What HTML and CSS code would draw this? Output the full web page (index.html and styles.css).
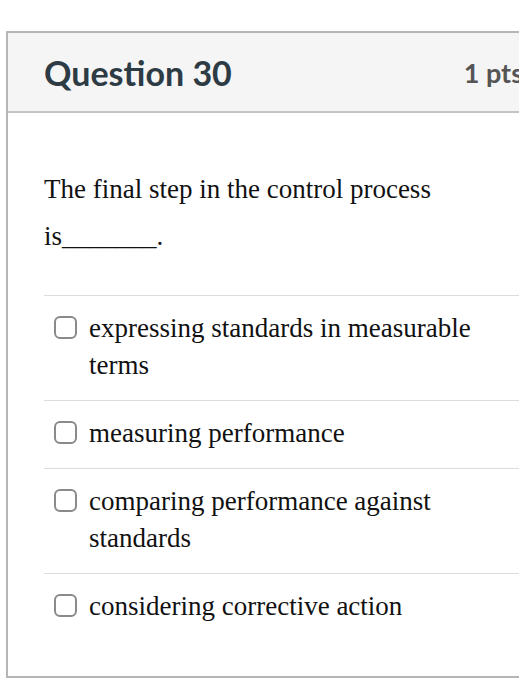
FILE: index.html
```html
<!DOCTYPE html>
<html>
<head>
<meta charset="utf-8">
<link rel="stylesheet" href="styles.css">
</head>
<body>
<div class="card">
  <div class="header">
    <h2 class="title">Question 30</h2>
    <span class="pts">1 pts</span>
  </div>
  <div class="content">
    <p class="question">The final step in the control process is_______.</p>
    <div class="answers">
      <label class="answer"><span class="box"></span><span class="atext">expressing standards in measurable terms</span></label>
      <label class="answer"><span class="box"></span><span class="atext">measuring performance</span></label>
      <label class="answer"><span class="box"></span><span class="atext">comparing performance against standards</span></label>
      <label class="answer"><span class="box"></span><span class="atext">considering corrective action</span></label>
    </div>
  </div>
</div>
</body>
</html>
```

FILE: styles.css
```css
html, body {
  margin: 0;
  padding: 0;
  background: #fff;
  overflow: hidden;
}
body {
  padding: 31px 0 0 6px;
}
.card {
  width: 557px;
  border: 2px solid #b5b5b5;
  border-right: none;
  box-sizing: border-box;
}
.header {
  height: 80px;
  background: #f5f5f5;
  border-bottom: 2px solid #c4c4c4;
  display: flex;
  align-items: center;
  justify-content: space-between;
  padding: 0 40px 0 36px;
  box-sizing: border-box;
}
.title {
  margin: 0;
  font-family: Lato, "Liberation Sans", sans-serif;
  font-weight: 700;
  font-size: 34px;
  color: #2d3b45;
}
.pts {
  font-family: Lato, "Liberation Sans", sans-serif;
  font-weight: 700;
  font-size: 27px;
  color: #555;
}
.content {
  padding: 53px 0 35px 36px;
}
.question {
  margin: 0 0 35px 0;
  width: 470px;
  font-family: "Liberation Serif", "Times New Roman", serif;
  font-size: 27px;
  line-height: 47px;
  color: #111;
}
.answers {
  border-top: 1px solid #dcdcdc;
}
.answer {
  display: flex;
  align-items: flex-start;
  padding: 14px 0 16px 10px;
  border-bottom: 1px solid #dcdcdc;
  font-family: "Liberation Serif", "Times New Roman", serif;
  font-size: 27px;
  line-height: 37px;
  color: #111;
}
.answer:last-child {
  border-bottom: none;
}
.box {
  flex: none;
  width: 23px;
  height: 23px;
  box-sizing: border-box;
  border: 2px solid #8a8a8a;
  border-radius: 6px;
  margin: 6px 12px 0 0;
}
.atext {
  width: 420px;
}
```
